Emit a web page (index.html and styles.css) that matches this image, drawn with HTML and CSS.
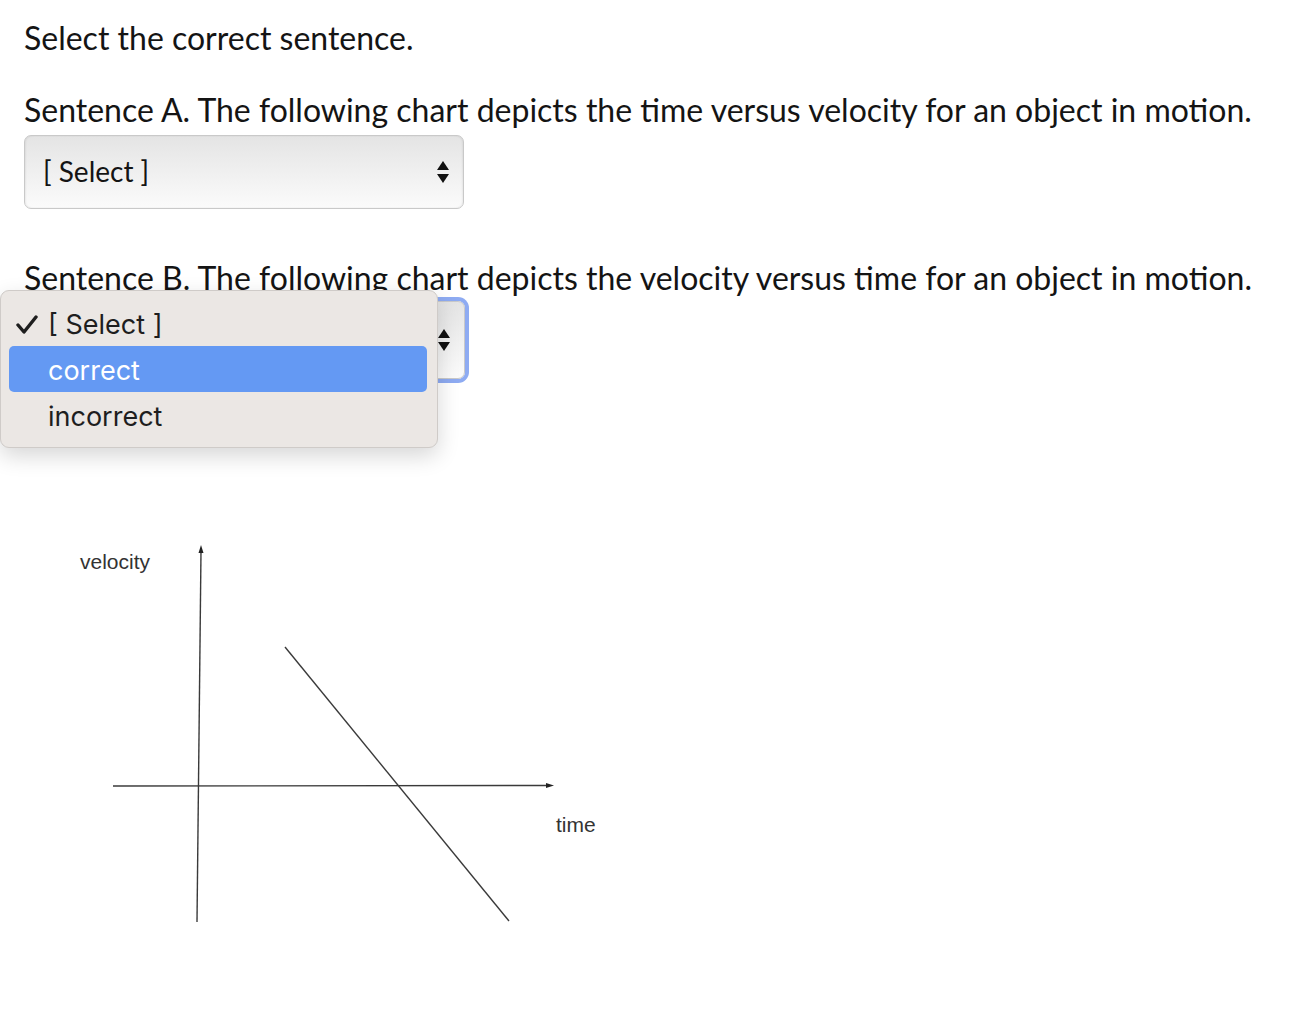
FILE: index.html
```html
<!DOCTYPE html>
<html lang="en">

<head>
    <meta charset="UTF-8">
    <meta name="viewport" content="width=device-width, initial-scale=1.0">
    <title>Quiz Question</title>
    <link rel="stylesheet" href="styles.css">
</head>

<body>
    <div class="question">
        <p class="intro">Select the correct sentence.</p>

        <p class="sentence first">Sentence A. The following chart depicts the time versus velocity for an object in motion.</p>
        <div class="select-box">
            <span class="select-label">[ Select ]</span>
            <svg class="select-arrows" width="12" height="24" viewBox="0 0 12 24">
                <polygon points="6,1 12,10 0,10" fill="#111" />
                <polygon points="0,14 12,14 6,23" fill="#111" />
            </svg>
        </div>

        <p class="sentence second">Sentence B. The following chart depicts the velocity versus time for an object in motion.</p>
        <div class="select-wrap">
            <div class="select-box focused">
                <span class="select-label">[ Select ]</span>
                <svg class="select-arrows" width="12" height="24" viewBox="0 0 12 24">
                    <polygon points="6,1 12,10 0,10" fill="#111" />
                    <polygon points="0,14 12,14 6,23" fill="#111" />
                </svg>
            </div>

            <!-- open dropdown list -->
            <ul class="dropdown">
                <li class="checked">
                    <svg class="check" width="22" height="20" viewBox="0 0 22 20">
                        <polyline points="2,10 8,17 20,2" fill="none" stroke="#1e1e1e" stroke-width="3.4" stroke-linecap="round" stroke-linejoin="round" />
                    </svg>
                    [ Select ]
                </li>
                <li class="active">correct</li>
                <li>incorrect</li>
            </ul>
        </div>

        <div class="chart">
            <svg width="560" height="400" viewBox="0 0 560 400">
                <g stroke="#3a3a3a" stroke-width="1.4" fill="none">
                    <line x1="141" y1="20" x2="137" y2="391" />
                    <line x1="53" y1="255" x2="488" y2="254.5" />
                    <line x1="225" y1="116" x2="449" y2="390" />
                </g>
                <polygon points="141,14 138.5,22 143.5,22" fill="#222" />
                <polygon points="494,254.5 486,252 486,257" fill="#222" />
                <text x="20" y="38" class="axis-label">velocity</text>
                <text x="496" y="301" class="axis-label">time</text>
            </svg>
        </div>
    </div>
</body>

</html>
```

FILE: styles.css
```css
* {
    margin: 0;
    padding: 0;
    box-sizing: border-box;
}

body {
    font-family: Lato, "Open Sans", sans-serif;
    font-size: 32px;
    color: #141414;
    background-color: #fff;
}

.question {
    padding: 19px 24px;
}

.intro,
.sentence {
    line-height: 38px;
}

.intro {
    margin-bottom: 34px;
}

.select-box {
    width: 440px;
    height: 74px;
    margin-top: 6px;
    display: flex;
    align-items: center;
    justify-content: space-between;
    padding: 0 14px 0 18px;
    border: 1px solid #c9c9c9;
    border-radius: 7px;
    background: linear-gradient(#e4e4e4, #fbfbfb);
    box-shadow: inset 1px 0 2px rgba(0, 0, 0, 0.06), inset -1px 0 2px rgba(0, 0, 0, 0.06);
    font-size: 28px;
}

.select-label {
    margin-top: -2px;
}

.sentence.second {
    margin-top: 50px;
}

.select-wrap {
    position: relative;
    width: 440px;
}

.select-box.focused {
    margin-top: 4px;
    height: 78px;
    width: 438px;
    margin-left: 3px;
    box-shadow: 0 0 0 4px #8eabf2;
}

.dropdown {
    position: absolute;
    left: -24px;
    top: -11px;
    width: 438px;
    height: 158px;
    list-style: none;
    padding: 9px 10px 9px 8px;
    background-color: #ebe7e4;
    border: 1px solid #cfcbc8;
    border-radius: 9px;
    box-shadow: 0 8px 22px rgba(0, 0, 0, 0.16);
    font-family: Inter, "Liberation Sans", sans-serif;
    font-size: 27px;
    color: #1e1e1e;
}

.dropdown li {
    height: 46px;
    line-height: 42px;
    padding-top: 4px;
    padding-left: 39px;
    position: relative;
    border-radius: 5px;
}

.dropdown li.active {
    background-color: #6499f3;
    color: #fff;
}

.check {
    position: absolute;
    left: 7px;
    top: 15px;
}

.chart {
    margin-top: 152px;
    margin-left: 36px;
}

.chart svg {
    display: block;
}

.axis-label {
    font-family: "Liberation Sans", Arial, sans-serif;
    font-size: 21px;
    fill: #333;
}
```
